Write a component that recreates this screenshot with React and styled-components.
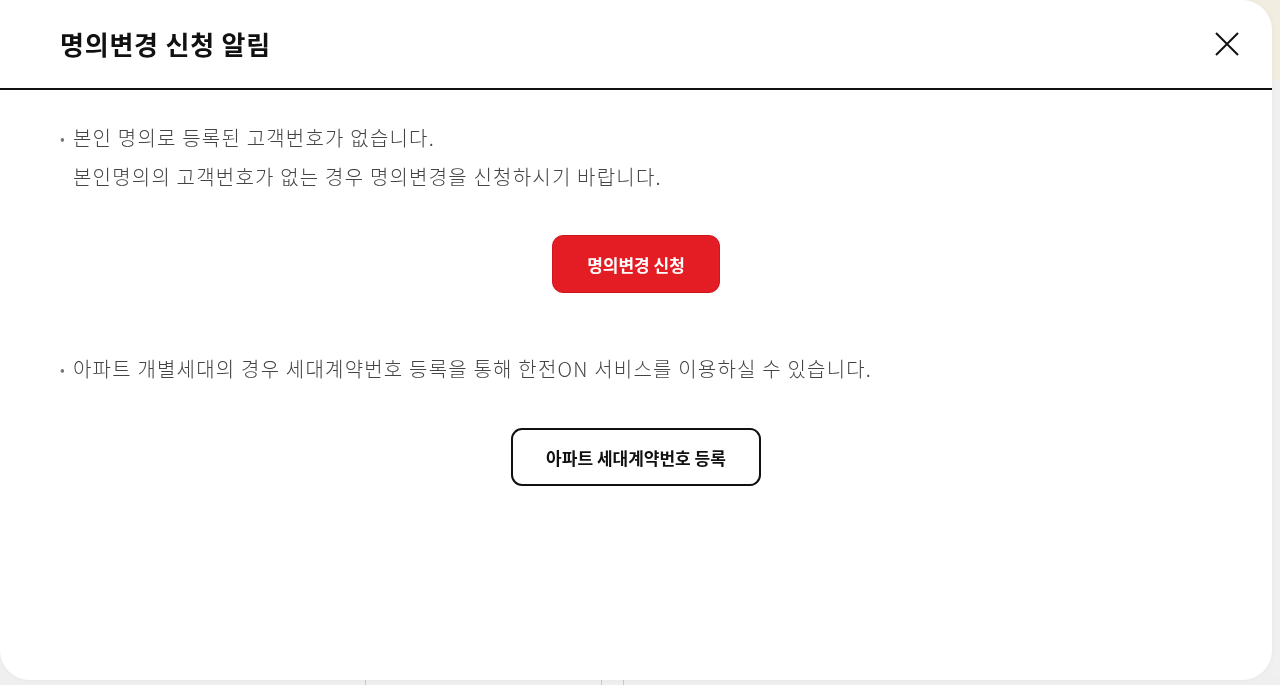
import React from "react";
import styled, { createGlobalStyle } from "styled-components";

const Global = createGlobalStyle`
  html, body { margin: 0; padding: 0; height: 100%; overflow: hidden; }
  body {
    font-family: "Noto Sans CJK KR", "Noto Sans", sans-serif;
    background: linear-gradient(to bottom, #f1ede0 0, #f1ede0 80px, #f0f0f0 80px);
  }
`;

const Page = styled.div`
  height: 685px;
  position: relative;
  display: flex;
  flex-direction: column;
  justify-content: flex-end;
`;

const TableRow = styled.div`
  height: 8px;
  background: #efefef;
  display: flex;
  padding-left: 365px;
  overflow: hidden;
`;

const Cell = styled.div`
  width: ${(p) => p.$w}px;
  border-left: 1px solid #c8c8c8;
  padding: 3px 0 0 20px;
  font-size: 17px;
  color: #777;
  line-height: 20px;
  box-sizing: border-box;
`;

const Overlay = styled.div`
  position: fixed;
  top: 0;
  left: 0;
  width: 1272px;
  height: 680px;
  background: #fff;
  border-radius: 0 30px 30px 30px;
  display: flex;
  flex-direction: column;
  box-shadow: 0 0 6px rgba(0, 0, 0, 0.04);
`;

const Header = styled.div`
  height: 88px;
  border-bottom: 2px solid #111;
  display: flex;
  align-items: center;
  justify-content: space-between;
  padding: 0 30px 0 60px;
`;

const Title = styled.h2`
  margin: 0;
  font-size: 26px;
  font-weight: 700;
  color: #111;
  letter-spacing: 0.03em;
  padding-bottom: 2px;
`;

const CloseButton = styled.button`
  width: 30px;
  height: 30px;
  border: 0;
  background: none;
  padding: 0;
  display: flex;
  align-items: center;
  justify-content: center;
  cursor: pointer;
`;

const Body = styled.div`
  padding: 28px 60px 0;
  display: flex;
  flex-direction: column;
`;

const Notice = styled.div`
  display: flex;
  font-size: 20px;
  font-weight: 300;
  line-height: 39px;
  color: #444;
  letter-spacing: 0.06em;
`;

const Bullet = styled.span`
  width: 13px;
  flex: none;
  font-size: 15px;
  color: #777;
  letter-spacing: 0;
`;

const Lines = styled.div`
  display: flex;
  flex-direction: column;
`;

const ButtonRow = styled.div`
  display: flex;
  justify-content: center;
  margin: ${(p) => p.$m};
`;

const ActionButton = styled.button`
  height: 58px;
  width: ${(p) => p.$w}px;
  border-radius: 11px;
  font-family: inherit;
  font-size: 17px;
  font-weight: 700;
  letter-spacing: 0;
  cursor: pointer;
  background: ${(p) => (p.$primary ? "#e41d25" : "#fff")};
  color: ${(p) => (p.$primary ? "#fff" : "#111")};
  border: ${(p) => (p.$primary ? "1px solid #d0161d" : "2px solid #111")};
`;

export default function App() {
  return (
    <>
      <Global />
      <Page>
        <TableRow>
          <Cell $w={236}>751814</Cell>
          <Cell $w={22} />
          <Cell $w={200}>••••••</Cell>
        </TableRow>
      </Page>
      <Overlay>
        <Header>
          <Title>명의변경 신청 알림</Title>
          <CloseButton aria-label="닫기">
            <svg width="24" height="24" viewBox="0 0 24 24">
              <path d="M1 1L23 23M23 1L1 23" stroke="#111" strokeWidth="2" fill="none" />
            </svg>
          </CloseButton>
        </Header>
        <Body>
          <Notice>
            <Bullet>•</Bullet>
            <Lines>
              <span>본인 명의로 등록된 고객번호가 없습니다.</span>
              <span>본인명의의 고객번호가 없는 경우 명의변경을 신청하시기 바랍니다.</span>
            </Lines>
          </Notice>
          <ButtonRow $m="39px 0 56px">
            <ActionButton $primary $w={168}>명의변경 신청</ActionButton>
          </ButtonRow>
          <Notice>
            <Bullet>•</Bullet>
            <Lines>
              <span>아파트 개별세대의 경우 세대계약번호 등록을 통해 한전ON 서비스를 이용하실 수 있습니다.</span>
            </Lines>
          </Notice>
          <ButtonRow $m="40px 0 0">
            <ActionButton $w={250}>아파트 세대계약번호 등록</ActionButton>
          </ButtonRow>
        </Body>
      </Overlay>
    </>
  );
}
